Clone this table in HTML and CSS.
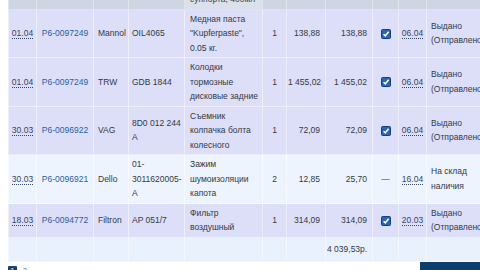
FILE: index.html
```html
<!DOCTYPE html>
<html>
<head>
<meta charset="utf-8">
<link rel="stylesheet" href="styles.css">
</head>
<body>
<div class="viewport">
  <table class="orders">
    <colgroup>
      <col class="c-date"><col class="c-order"><col class="c-brand"><col class="c-art"><col class="c-name"><col class="c-qty"><col class="c-price"><col class="c-sum"><col class="c-chk"><col class="c-date2"><col class="c-status">
    </colgroup>
    <tr class="r-top">
      <td></td><td></td><td></td><td></td><td class="name">Очиститель тормозов и суппорта, 400мл</td><td></td><td></td><td></td><td></td><td></td><td></td>
    </tr>
    <tr class="r-lav">
      <td class="ctr"><span class="dt">01.04</span></td><td class="ctr"><a class="lnk">Р6-0097249</a></td><td>Mannol</td><td class="art">OIL4065</td><td class="name">Медная паста "Kupferpaste", 0.05 кг.</td><td class="ctr">1</td><td class="num">138,88</td><td class="num">138,88</td><td class="ctr"><span class="cb"><svg width="10" height="10" viewBox="0 0 10 10"><rect x="0.5" y="0.5" width="9" height="9" rx="1" fill="#2f62b0" stroke="#17407e"/><path d="M2.6 5.2 L4.3 6.9 L7.6 2.8" stroke="#fff" stroke-width="1.6" fill="none"/></svg></span></td><td class="ctr"><span class="dt">06.04</span></td><td class="st">Выдано<br>(Отправлено)</td>
    </tr>
    <tr class="r-lav">
      <td class="ctr"><span class="dt">01.04</span></td><td class="ctr"><a class="lnk">Р6-0097249</a></td><td>TRW</td><td class="art">GDB 1844</td><td class="name">Колодки тормозные дисковые задние</td><td class="ctr">1</td><td class="num">1 455,02</td><td class="num">1 455,02</td><td class="ctr"><span class="cb"><svg width="10" height="10" viewBox="0 0 10 10"><rect x="0.5" y="0.5" width="9" height="9" rx="1" fill="#2f62b0" stroke="#17407e"/><path d="M2.6 5.2 L4.3 6.9 L7.6 2.8" stroke="#fff" stroke-width="1.6" fill="none"/></svg></span></td><td class="ctr"><span class="dt">06.04</span></td><td class="st">Выдано<br>(Отправлено)</td>
    </tr>
    <tr class="r-lav">
      <td class="ctr"><span class="dt">30.03</span></td><td class="ctr"><a class="lnk">Р6-0096922</a></td><td>VAG</td><td class="art">8D0 012 244<br>A</td><td class="name">Съемник колпачка болта колесного</td><td class="ctr">1</td><td class="num">72,09</td><td class="num">72,09</td><td class="ctr"><span class="cb"><svg width="10" height="10" viewBox="0 0 10 10"><rect x="0.5" y="0.5" width="9" height="9" rx="1" fill="#2f62b0" stroke="#17407e"/><path d="M2.6 5.2 L4.3 6.9 L7.6 2.8" stroke="#fff" stroke-width="1.6" fill="none"/></svg></span></td><td class="ctr"><span class="dt">06.04</span></td><td class="st">Выдано<br>(Отправлено)</td>
    </tr>
    <tr class="r-blue">
      <td class="ctr"><span class="dt">30.03</span></td><td class="ctr"><a class="lnk">Р6-0096921</a></td><td>Dello</td><td class="art">01-<br>3011620005-<br>A</td><td class="name">Зажим шумоизоляции капота</td><td class="ctr">2</td><td class="num">12,85</td><td class="num">25,70</td><td class="ctr">—</td><td class="ctr"><span class="dt">16.04</span></td><td class="st">На склад<br>наличия</td>
    </tr>
    <tr class="r-lav">
      <td class="ctr"><span class="dt">18.03</span></td><td class="ctr"><a class="lnk">Р6-0094772</a></td><td>Filtron</td><td class="art">AP 051/7</td><td class="name">Фильтр воздушный</td><td class="ctr">1</td><td class="num">314,09</td><td class="num">314,09</td><td class="ctr"><span class="cb"><svg width="10" height="10" viewBox="0 0 10 10"><rect x="0.5" y="0.5" width="9" height="9" rx="1" fill="#2f62b0" stroke="#17407e"/><path d="M2.6 5.2 L4.3 6.9 L7.6 2.8" stroke="#fff" stroke-width="1.6" fill="none"/></svg></span></td><td class="ctr"><span class="dt">20.03</span></td><td class="st">Выдано<br>(Отправлено)</td>
    </tr>
    <tr class="r-foot">
      <td></td><td></td><td></td><td></td><td></td><td></td><td></td><td class="num total">4 039,53р.</td><td></td><td></td><td></td>
    </tr>
  </table>
  <div class="below">
    <div class="pager"><span class="pg-on">1</span><span class="pg">2</span></div>
    <div class="btn"></div>
  </div>
</div>
</body>
</html>
```

FILE: styles.css
```css
html, body {
  margin: 0;
  padding: 0;
  background: #ffffff;
  overflow: hidden;
}
.viewport {
  width: 480px;
  height: 270px;
  overflow: hidden;
  padding-left: 8px;
  box-sizing: border-box;
}
.orders {
  border-collapse: collapse;
  table-layout: fixed;
  width: 520px;
  margin-top: -40px;
  font-family: "Liberation Sans", Arial, sans-serif;
  font-size: 8.5px;
  line-height: 14.5px;
  color: #333a44;
  border-left: 1px solid #b9c0ca;
  border-bottom: 1px solid #b9c0ca;
}
.c-date { width: 28px; }
.c-order { width: 57px; }
.c-brand { width: 35px; }
.c-art { width: 56px; }
.c-name { width: 78px; }
.c-qty { width: 24px; }
.c-price { width: 39px; }
.c-sum { width: 47px; }
.c-chk { width: 26px; }
.c-date2 { width: 28px; }
.c-status { width: 102px; }
.orders td {
  padding: 2px 4px;
  vertical-align: middle;
  border: 1px solid #eeeefb;
  overflow: hidden;
}
.orders td.art { padding-left: 3px; padding-right: 1px; white-space: nowrap; }
.orders td.name { padding-left: 5px; padding-right: 3px; }
.orders td.ctr { text-align: center; padding-left: 1px; padding-right: 1px; }
.orders td.num { text-align: right; padding-right: 5px; padding-left: 1px; white-space: nowrap; }
.orders td.st { white-space: nowrap; }
.r-top td { background: #cdd6e2; border-color: #dfe5ee; }
.r-top td.name { background: #dbe1ea; color: #444; }
.r-lav td { background: #dddef7; }
.r-blue td { background: #eef4fd; border-color: #f6f9fe; }
.r-foot td { background: #e9f1fc; border-color: #f4f8fe; height: 19px; }
.dt {
  color: #33466a;
  border-bottom: 1px dotted #33466a;
}
.lnk { color: #2a5f9f; }
.cb { display: inline-block; width: 10px; height: 10px; vertical-align: middle; }
.cb svg { display: block; }
.below {
  display: flex;
  justify-content: space-between;
  align-items: flex-start;
  height: 12px;
}
.pager {
  display: flex;
  gap: 6px;
  margin-top: 4px;
  font-family: "Liberation Sans", Arial, sans-serif;
  font-size: 7px;
  line-height: 9px;
}
.pg-on {
  display: inline-block;
  width: 9px;
  height: 9px;
  background: #1d3f6e;
  color: #fff;
  text-align: center;
  border-radius: 1px;
}
.pg { color: #666; }
.btn {
  width: 60px;
  height: 12px;
  background: #0d3d6c;
}
```
